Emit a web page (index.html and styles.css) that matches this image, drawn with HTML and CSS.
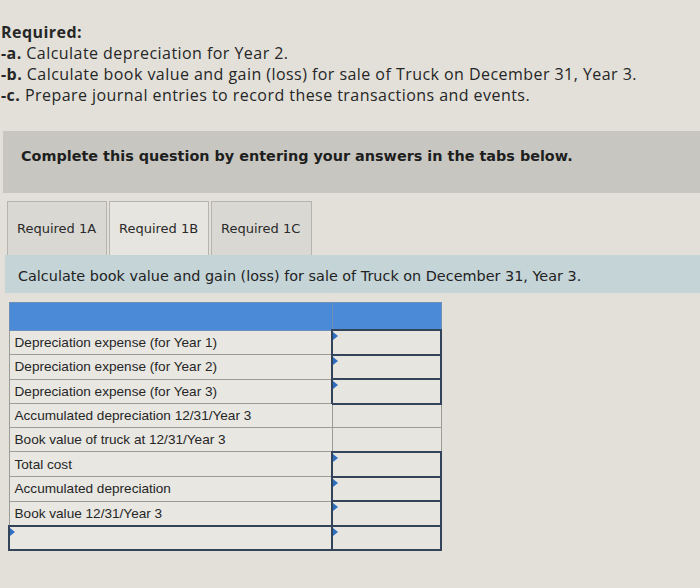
FILE: index.html
```html
<!DOCTYPE html>
<html>
<head>
<meta charset="utf-8">
<link rel="stylesheet" href="styles.css">
</head>
<body>
<div class="page">
  <div class="req">
    <div class="req-title">Required:</div>
    <div class="req-line"><b>-a.</b> Calculate depreciation for Year 2.</div>
    <div class="req-line"><b>-b.</b> Calculate book value and gain (loss) for sale of Truck on December 31, Year 3.</div>
    <div class="req-line"><b>-c.</b> Prepare journal entries to record these transactions and events.</div>
  </div>

  <div class="banner">Complete this question by entering your answers in the tabs below.</div>

  <div class="tabs">
    <div class="tab">Required 1A</div>
    <div class="tab active">Required 1B</div>
    <div class="tab wide">Required 1C</div>
  </div>

  <div class="prompt">Calculate book value and gain (loss) for sale of Truck on December 31, Year 3.</div>

  <table class="grid">
    <tr class="head"><th class="c-label"></th><th class="c-val"></th></tr>
    <tr><td class="c-label">Depreciation expense (for Year 1)</td><td class="c-val input"><span class="mark"></span></td></tr>
    <tr><td class="c-label">Depreciation expense (for Year 2)</td><td class="c-val input"><span class="mark"></span></td></tr>
    <tr><td class="c-label">Depreciation expense (for Year 3)</td><td class="c-val input"><span class="mark"></span></td></tr>
    <tr><td class="c-label">Accumulated depreciation 12/31/Year 3</td><td class="c-val"></td></tr>
    <tr><td class="c-label">Book value of truck at 12/31/Year 3</td><td class="c-val"></td></tr>
    <tr><td class="c-label">Total cost</td><td class="c-val input"><span class="mark"></span></td></tr>
    <tr><td class="c-label">Accumulated depreciation</td><td class="c-val input"><span class="mark"></span></td></tr>
    <tr><td class="c-label">Book value 12/31/Year 3</td><td class="c-val input"><span class="mark"></span></td></tr>
    <tr><td class="c-label input"><span class="mark"></span></td><td class="c-val input"><span class="mark"></span></td></tr>
  </table>
</div>
</body>
</html>
```

FILE: styles.css
```css
html, body {
  margin: 0;
  padding: 0;
  background: #e2e0d9;
}
.page {
  width: 700px;
  height: 588px;
  overflow: hidden;
  background: #e2e0d9;
  color: #232323;
}
.req {
  padding-top: 22px;
  padding-left: 1px;
  font-family: "Open Sans", "Liberation Sans", sans-serif;
  font-size: 16px;
  line-height: 21px;
  letter-spacing: 0.45px;
  color: #262626;
}
.req-title {
  font-weight: 700;
}
.req-line b {
  font-weight: 700;
}
.banner {
  margin: 25px 0 0 3px;
  height: 62px;
  box-sizing: border-box;
  padding: 17px 0 0 18px;
  background: #c7c6c1;
  font-family: "DejaVu Sans", Verdana, sans-serif;
  font-weight: 700;
  font-size: 14.4px;
  color: #1e1e1e;
}
.tabs {
  display: flex;
  gap: 2px;
  margin: 8px 0 0 7px;
  height: 54px;
}
.tab {
  width: 100px;
  box-sizing: border-box;
  border: 1px solid #b5b4ae;
  border-bottom: none;
  background: #d9d8d2;
  display: flex;
  align-items: center;
  padding-left: 9px;
  font-family: "DejaVu Sans", Verdana, sans-serif;
  font-size: 13px;
  color: #2a2a2a;
}
.tab.active {
  background: #e6e5df;
  width: 100px;
}
.tab.wide {
  width: 101px;
}
.prompt {
  margin: 0 0 0 5px;
  height: 38px;
  box-sizing: border-box;
  padding: 13px 0 0 13px;
  background: #c4d4d7;
  font-family: "DejaVu Sans", Verdana, sans-serif;
  font-size: 14.4px;
  color: #222;
}
.grid {
  margin: 9px 0 0 8px;
  border-collapse: collapse;
  font-family: "Liberation Sans", Arial, sans-serif;
  font-size: 13.6px;
  color: #262626;
}
.grid th {
  background: #4a8ad6;
  height: 26px;
  padding: 0;
  border: 1px solid #6e8fb8;
}
.grid td {
  height: 22.6px;
  padding: 0 0 0 5px;
  border: 1px solid #9c9b96;
  background: #e8e7e2;
  position: relative;
  vertical-align: middle;
}
.c-label { width: 316px; }
.c-val { width: 102px; }
.grid td.c-val { background: #e6e5e0; }
.grid td.input {
  border: 2px solid #33435a;
}
.mark {
  position: absolute;
  left: 0;
  top: 1px;
  width: 0;
  height: 0;
  border-top: 4px solid transparent;
  border-bottom: 4px solid transparent;
  border-left: 5px solid #2f6fc0;
}
```
